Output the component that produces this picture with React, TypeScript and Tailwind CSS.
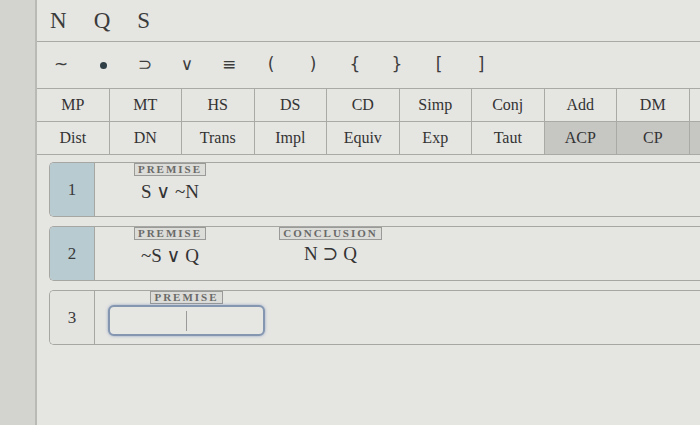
import React from 'react';

const serif = { fontFamily: '"Liberation Serif", "DejaVu Serif", serif' };
const sans = { fontFamily: '"DejaVu Sans", "Open Sans", sans-serif' };

const symbols = ['~', '•', '⊃', '∨', '≡', '(', ')', '{', '}', '[', ']'];

const rulesTop = ['MP', 'MT', 'HS', 'DS', 'CD', 'Simp', 'Conj', 'Add', 'DM', ''];
const rulesBottom = ['Dist', 'DN', 'Trans', 'Impl', 'Equiv', 'Exp', 'Taut', 'ACP', 'CP', ''];

function Tag({ children }: { children: React.ReactNode }) {
  return (
    <span
      className="inline-block h-[13px] border border-[#9a9a98] bg-[#dcdcd9] px-[3px] text-[11px] leading-[11px] font-bold tracking-[2px] text-[#6a6a68]"
      style={serif}
    >
      {children}
    </span>
  );
}

function ProofRow({
  n,
  active,
  children,
}: {
  n: number;
  active: boolean;
  children: React.ReactNode;
}) {
  return (
    <div className="flex h-[55px] rounded-l-[5px] border-[1.5px] border-r-0 border-[#a6a6a3]">
      <div
        className={`flex w-[45px] shrink-0 items-center justify-center rounded-l-[4px] border-r-[1.5px] border-[#a6a6a3] text-[17px] text-[#3a3a3a] ${
          active ? 'bg-[#b7cbd1]' : 'bg-[#e3e3e0]'
        }`}
        style={serif}
      >
        {n}
      </div>
      <div className="flex flex-1">{children}</div>
    </div>
  );
}

export default function App() {
  return (
    <div className="flex h-[425px] w-[700px] overflow-hidden bg-[#d5d5d2]">
      {/* left margin */}
      <div className="w-[35px] shrink-0 bg-[#d3d3d0]" />

      {/* main panel */}
      <div className="flex flex-1 flex-col border-l-2 border-[#b9b9b6] bg-[#e5e5e2]">
        {/* variables */}
        <div className="flex h-[42px] items-center gap-[27px] border-b-[1.5px] border-[#a9a9a6] pl-[13px] pt-[2px] text-[23px] text-[#3b3b3b]" style={serif}>
          <span>N</span>
          <span>Q</span>
          <span>S</span>
        </div>

        {/* symbols */}
        <div className="flex h-[46px] items-center pl-[3px] text-[17px] text-[#3d3d3d]" style={sans}>
          {symbols.map((s, i) => (
            <span key={i} className="flex w-[42px] justify-center">
              {s === '•' ? <span className="h-[7px] w-[7px] rounded-full bg-[#2f3f45]" /> : s}
            </span>
          ))}
        </div>

        {/* rules */}
        <div className="border-t-[1.5px] border-b-[1.5px] border-[#a9a9a6]">
          <div className="grid grid-cols-[repeat(10,72.5px)] border-b-[1.5px] border-[#a9a9a6]">
            {rulesTop.map((r, i) => (
              <div
                key={i}
                className="flex h-[32px] items-center justify-center border-r-[1.5px] border-[#a9a9a6] text-[16px] text-[#333]"
                style={serif}
              >
                {r}
              </div>
            ))}
          </div>
          <div className="grid grid-cols-[repeat(10,72.5px)]">
            {rulesBottom.map((r, i) => (
              <div
                key={i}
                className={`flex h-[32px] items-center justify-center border-r-[1.5px] border-[#a9a9a6] text-[16px] text-[#333] ${
                  i >= 7 ? 'bg-[#c6c6c3]' : ''
                }`}
                style={serif}
              >
                {r}
              </div>
            ))}
          </div>
        </div>

        {/* proof lines */}
        <div className="flex flex-col gap-[9px] pl-[12px] pt-[7px]">
          <ProofRow n={1} active>
            <div className="flex w-[150px] flex-col items-center">
              <Tag>PREMISE</Tag>
              <span className="mt-[2px] text-[19px] text-[#333]" style={serif}>
                S ∨ ~N
              </span>
            </div>
          </ProofRow>

          <ProofRow n={2} active>
            <div className="flex w-[150px] flex-col items-center">
              <Tag>PREMISE</Tag>
              <span className="mt-[2px] text-[19px] text-[#333]" style={serif}>
                ~S ∨ Q
              </span>
            </div>
            <div className="ml-[28px] flex w-[115px] flex-col items-center">
              <Tag>CONCLUSION</Tag>
              <span className="text-[19px] text-[#333]" style={serif}>
                N ⊃ Q
              </span>
            </div>
          </ProofRow>

          <ProofRow n={3} active={false}>
            <div className="ml-[13px] flex w-[157px] flex-col items-center">
              <Tag>PREMISE</Tag>
              <div className="mt-[1px] flex h-[31px] w-full items-center justify-center rounded-[6px] border-2 border-[#8496b0] bg-[#e6e6e3] shadow-[0_0_3px_rgba(90,120,170,0.6)]">
                <span className="h-[20px] w-[1.5px] bg-[#9a9a98]" />
              </div>
            </div>
          </ProofRow>
        </div>
      </div>
    </div>
  );
}
